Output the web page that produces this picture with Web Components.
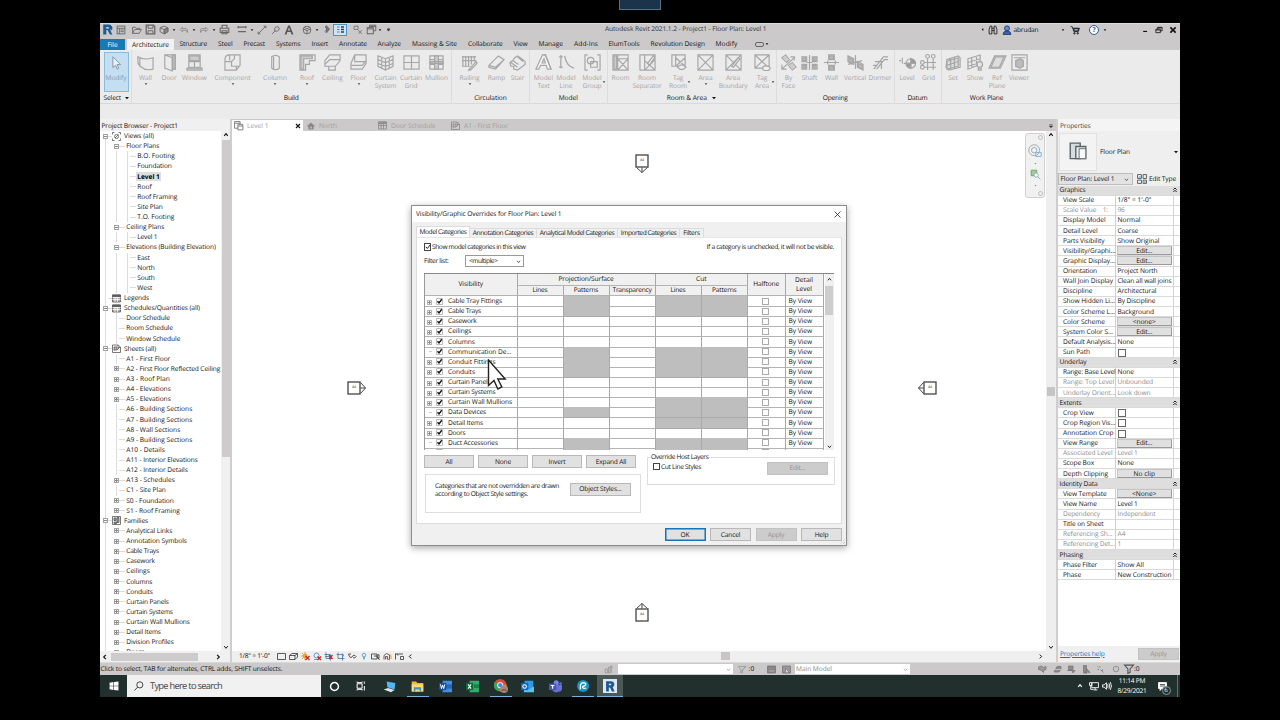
<!DOCTYPE html>
<html lang="en">
<head>
<meta charset="utf-8">
<title>Autodesk Revit 2021.1.2 - Project1 - Floor Plan: Level 1</title>
<style>
  body {
    margin: 0;
    width: 1280px;
    height: 720px;
    overflow: hidden;
    background: #000;
    color: #111;
    font: 6.6px/10px "Open Sans", "Noto Sans", sans-serif;
    text-rendering: geometricPrecision;
  }
</style>
</head>
<body>
<revit-app></revit-app>

<script>
const ICONS = {
  revit: '<path d="M2 1h9.500a4.500 4.500 0 0 1 1.600 8.600L17 17h-4l-4-7H7v7H2z" fill="#1f5d99" stroke="none"/><path d="M7 5h4v2.500H7z" fill="#cfe3f3" stroke="none"/><path d="M14 3l2 2v4l-2 1" stroke="#123a66"/>',
  home: '<rect x="2" y="2" width="14" height="14"/><path d="M2 6h14M6 6v10M8 9h6M8 12h6"/>',
  open: '<path d="M1 15V4h5l2 2h6v2M1 15l4-7h12l-4 7z"/>',
  save: '<path d="M2 2h12l2 2v12H2z" stroke-width="2"/><path d="M5 2v5h8V2M5 16v-5h8v5"/>',
  cube: '<path d="M9 2l7 3v7l-7 4-7-4V5zM2 5l7 3 7-3M9 8v8"/><path d="M10 9l6-3v6l-6 4z" fill="#8a8a8a"/>',
  undo: '<path d="M6 4L2 8l4 4V9.500h5q4 0 4 4 2-8-4-7H6z"/>',
  redo: '<path d="M12 4l4 4-4 4V9.500H7q-4 0-4 4-2-8 4-7h5z"/>',
  print: '<path d="M5 6V2h8v4M2 7h14v7H2zM5 11h8v5H5z" stroke-width="1.800"/>',
  dim: '<path d="M2 4h14M2 2v4M16 2v4M2 12h14" stroke-width="2.200"/>',
  align: '<path d="M2 16L16 2M2 12v4h4M12 2h4v4"/>',
  tag: '<path d="M2 16l5-5M7 11q-2-8 5-8 5 2 2 6-2 3-7 2z"/>',
  text: '<path d="M1 17L7.500 1h3L17 17h-3.500L12 12.500H6L4.500 17zM7 10h4L9 4.500z" fill="currentColor" stroke="none"/>',
  globe: '<circle cx="9" cy="9" r="7"/><path d="M2 7l7 3 7-3M9 10v6M4 4l5 3 5-3"/>',
  section: '<path d="M6 4l3-3 6 7-6 8-3-3 4-5z"/><path d="M9 3l5 5-5 6z" fill="#777"/>',
  thin: '<path d="M2 4h5M2 9h5M2 14h5" stroke-width="1.300"/><path d="M10 4h6M10 9h6M10 14h6" stroke-width="2.800"/>',
  closewin: '<path d="M2 2h7v6H2zM8 8l8 8M16 9l-6 7"/>',
  windows: '<rect x="2" y="6" width="10" height="10"/><path d="M6 6V2h10v9h-4M2 8h10M6 4h10"/>',
  down: '<path d="M3 6h12l-6 7z" fill="currentColor" stroke="none"/>',
  left: '<path d="M12 4v10L6 9z" fill="currentColor" stroke="none"/>',
  more: '<path d="M4 5h10M4 9h10l-5 5z" fill="currentColor"/>',
  arrow: '<path d="M5 1v14l3.500-3 2 5 2-1-2-5H15z" fill="#e8f2f9"/>',
  wall: '<path d="M1 3q6 4 16 1v12q-8 2-12-2-3-1-4-5zM3 4v8"/>',
  door: '<path d="M4 1h11v15h-3M4 1l8 3v14l-8-3z"/><path d="M12 1h3v15h-3z" fill="#bbb"/>',
  window: '<path d="M3 1h12v13H3zM9 1v13M3 8h12M1 16h16"/><path d="M4 2h10v5H4zM1 15h16v2H1z" fill="#ccc"/>',
  component: '<path d="M1 6q0-5 5-5h11v11l-4 5H1zM1 8h7v5h9M8 8l3-3V1M6 1v6M13 13v4"/>',
  column: '<path d="M5 3q4-3 8 0v12q-4 3-8 0zM7 3v13"/>',
  roof: '<path d="M1 1h16v6h-6v4H7v6H1zM1 4h13M4 4v13"/><path d="M2 2h12v3H5v11H2z" fill="#ccc"/>',
  ceiling: '<path d="M1 7l5-6h11v6l-5 6H1zM1 11l5-5h11M5 13v4h7v-4"/>',
  floor: '<path d="M1 10l4-9h12v9l-4 6H1zM1 12h12l4-5M5 1v7h12"/>',
  curtain: '<path d="M1 2l8 3 8-3v11l-8 4-8-4zM9 5v12M1 6l8 3 8-3M1 10l8 3 8-3M5 3v12M13 3v12"/>',
  grid4: '<rect x="1" y="2" width="16" height="14"/><path d="M9 2v14M1 9h16"/>',
  mullion: '<path d="M2 2h6v14H2zM10 2h6v14h-6zM2 6h6M2 11h6M10 6h6M10 11h6"/><path d="M7 2h4v14H7zM2 8h14v2H2z" fill="#ccc"/>',
  railing: '<path d="M1 3h15M1 7h15M2 2v11M5 2v11M8 2v11M11 2v9M14 2v6M1 13h9M8 17l8-9 1 2-7 7z"/>',
  ramp: '<path d="M1 12L11 2l6 4-9 10-7-2zM1 12l7 2 9-8"/>',
  stair: '<path d="M1 9l3-2 2-3 3-2 3 2 5 4v3l-8 6-4-1V13H2zM4 7l6 4M9 3l6 5M2 9l7 5"/>',
  mtext: '<path d="M1 16L8 1h3l6 15h-4l-1-4H6l-2 4zM7.500 9.500h3.500L9.500 5z" fill="#f6f6f6"/><path d="M9 1l2 0 6 15"/>',
  mline: '<path d="M3 1v14M1 3h4M1 14h4M7 2q2 11 10 13" stroke-width="1.300"/>',
  group: '<path d="M4 1H1v16h3M14 1h3v16h-3"/><circle cx="7" cy="7" r="3.500"/><path d="M7 8h7v6H7z"/>',
  room: '<path d="M1 1h16v16H1zM6 1v16M6 5h11M6 5l11 12M17 5L6 17"/><path d="M2 2h3v14H2z" fill="#ccc"/>',
  roomsep: '<path d="M1 1h16v16H1zM6 1v16M6 17L17 6M6 7l11 10M9 10l6-8 2 1-6 9z"/>',
  tagroom: '<path d="M2 1h14v12H2zM6 1v12M6 4l10 9M16 4L6 13"/><path d="M8 14q4-5 9 0-4 5-9 0z" fill="#eee"/>',
  area: '<path d="M1 1h16v16H1zM1 1l16 16M17 1L1 17"/>',
  boundary: '<path d="M1 1h16v16H1zM1 1l16 16M17 1L1 17"/><path d="M7 13l7-9 2 1-7 9z" fill="#eee"/>',
  tagarea: '<path d="M1 1h15v14H1zM1 1l15 14M16 1L1 15"/><ellipse cx="13" cy="15" rx="4" ry="2.500" fill="#eee"/>',
  byface: '<path d="M2 4l4-3 4 5-3 3zM9 12l4-3 4 5-4 3zM2 16L16 3M11 3h4v4M2 11v5h5"/><path d="M3 4l3-2 3 4-2 2zM10 12l3-2 3 4-3 2z" fill="#ccc" stroke="none"/>',
  shaft: '<path d="M1 3h5v5H1zM1 11h5v5H1zM12 3h5v5h-5zM12 11h5v5h-5zM9 1v16M6 9h6" /><path d="M2 4h3v3H2zM2 12h3v3H2zM13 4h3v3h-3zM13 12h3v3h-3z" fill="#bbb"/>',
  owall: '<path d="M6 1h6v5H6zM6 12h6v5H6zM1 9h16M5 7v4M13 7v4"/><path d="M7 2h4v3H7zM7 13h4v3H7z" fill="#bbb"/>',
  vertical: '<path d="M1 2l6 3v6L1 8zM11 8l6 3v6l-6-3zM9 1v15M1 11l15-4"/><path d="M2 4l4 2v4L2 8zM12 10l4 2v4l-4-2z" fill="#bbb"/>',
  dormer: '<path d="M2 16L12 3h5M5 16L13 6h4M3 8h7v8M1 12h5" stroke-width="1.300"/>',
  level: '<path d="M0 7h2M3.500 4v6M5 10h12M12.500 4v12"/><circle cx="12.500" cy="10" r="5"/><path d="M12.500 5a5 5 0 0 1 5 5h-5zM7.500 10h5v5a5 5 0 0 1-5-5z" fill="#999"/>',
  grid: '<path d="M8 5v12M14 5v12M4 9h13M4 14h13"/><circle cx="8" cy="2.500" r="2"/><circle cx="14" cy="2.500" r="2"/><circle cx="2.500" cy="9" r="2"/><circle cx="2.500" cy="14" r="2"/>',
  set: '<path d="M2 6l12-4 2 2v10L4 17l-3-3zM5 5v11M10 3v12M2 10l13-4M2 14l13-3"/><path d="M2 8l12-4v9L2 16z" fill="#ddd"/><path d="M6 5v11M10 4v11M2 12l12-4"/>',
  show: '<path d="M1 5l13-4v10L1 16zM5 4v11M10 2v11M1 9l13-4M1 13l13-4"/><circle cx="13.500" cy="11" r="3" fill="#e6e6e6"/><path d="M12 15h3v2h-3z"/>',
  refplane: '<path d="M6 2h12l-6 13H0z"/><path d="M5 5h11M3 10l12-7" /><path d="M7 3h9l-5 11H2z" fill="#ddd"/>',
  viewer: '<path d="M1 1h16v16H1zM3 4h12"/><path d="M5 7l5-2 3 2v6l-4 2-4-2z" fill="#bbb"/>',
  view: '<path d="M1 1h10v12H1z"/><path d="M7 6h9v10H7z" fill="#fff"/><path d="M1 4h10M7 9h9"/>',
  house: '<path d="M1 9l8-7 8 7h-3v7H4V9z" fill="#888"/><path d="M7 10h4v5H7z" fill="#eee"/>',
  sched: '<path d="M1 2h16v14H1z"/><path d="M1 2h16v3H1z" fill="#999"/><path d="M6 5v11M11 5v11M1 9h16"/>',
  schedlist: '<path d="M1 2h16v14H1z" fill="#aaa"/><path d="M1 7h16M1 11h16M6 3v13M11 3v13" stroke="#fff"/><path d="M1 2h16v3H1z" fill="#666"/>',
  sheet: '<path d="M1 2h11l5 4v11H1zM12 2v5h5M4 13l4-4 2 3 4-4" /><path d="M4 6h6v6H4z" fill="#bbb"/>',
  family: '<path d="M1 1h16v16H1z"/><path d="M4 4h4v5H4zM10 3h4v10h-4zM4 12h5v3H4z" fill="#999"/>',
  views: '<path d="M1 5V1h4M13 1h4v4M17 13v4h-4M5 17H1v-4"/><circle cx="9" cy="9" r="4"/><path d="M6 12l7-7"/>',
  bino: '<path d="M2 16V8l2-6h3v14zM11 16V2h3l2 6v8zM7 6h4M7 10h4" stroke-width="1.800"/>',
  user: '<circle cx="9" cy="6" r="4.500" fill="#5f8fd0" stroke="#243a63"/><path d="M2 17q0-5 5-6h4q5 1 5 6z" fill="#3c66ac" stroke="#243a63"/>',
  cart: '<path d="M1 3h3l3 9h8l2-6H5" stroke="#333"/><path d="M6 6h10l-2 5H8z" fill="#7fa2c8"/><circle cx="8" cy="15" r="1.300"/><circle cx="14" cy="15" r="1.300"/>',
  close: '<path d="M3 3l12 12M15 3L3 15"/>',
  closebold: '<path d="M3 3l12 12M15 3L3 15" stroke-width="3.500"/>',
  restore: '<path d="M2 7h10v8H2zM6 7V3h10v8h-4M2 9h10M6 4h10" stroke-width="1.800"/>',
  min: '<path d="M3 14h10" stroke-width="3"/>',
  chevup: '<path d="M5 11l4-5 4 5" stroke-width="2.300"/>',
  chevdown: '<path d="M5 7l4 5 4-5" stroke-width="2.200"/>',
  chevleft: '<path d="M11 4L6 9l5 5" stroke-width="2.500"/>',
  chevright: '<path d="M7 4l5 5-5 5" stroke-width="2.500"/>',
  fold: '<path d="M4 8l5-5 5 5M4 15l5-5 5 5" stroke-width="3"/>',
  wheel: '<circle cx="8" cy="8" r="7"/><circle cx="8" cy="8" r="3.500"/><path d="M10 11h7v5h-7z" stroke="#7fb2dd"/>',
  zoom: '<path d="M2 2h9v9H2z" fill="#9ccf98" stroke="#6aa56b"/><circle cx="10" cy="10" r="3.500" fill="#fff"/><path d="M12 12l5 5"/>',
  floorplan: '<path d="M2 1h9v14H2z" fill="#d5dde2"/><path d="M7 4h9v11H7z" fill="#e9edef"/><path d="M10 6h6v9h-6z" fill="#f8f8f8" stroke-width=".8"/>',
  edittype: '<path d="M1 1h7v7H1zM1 11h7v6H1zM11 1h6v7h-6zM11 11h6v6h-6z" stroke="#555"/><path d="M3 4h4v3H3zM12 12h4v4h-4z" fill="#7fc3e0" stroke="none"/>',
  rect: '<path d="M1 3h16v12H1z"/>',
  box: '<path d="M1 7l5-4h11v7l-5 5H1zM1 7h11v8M12 7l5-4"/>',
  sun: '<circle cx="8" cy="8" r="4" fill="#f0b429" stroke="#d78b1c"/><path d="M8 0v3M8 13v3M0 8h3M2 2l2 2M2 14l2-2" stroke="#d78b1c"/><path d="M9 8l8 8M17 8l-8 8" stroke="#c22" stroke-width="2.500"/>',
  shadow: '<circle cx="7" cy="7" r="5" stroke="#4d80b5"/><path d="M2 15h10" stroke="#4d80b5"/><path d="M9 9l7 7M16 9l-7 7" stroke="#c22" stroke-width="2.500"/>',
  crop: '<path d="M4 1v12h13M1 5h12v12M2 9h9v5" stroke="#3d74ac"/><path d="M10 6l7 8M17 6l-7 8" stroke="#c22" stroke-width="2.500"/>',
  crop2: '<path d="M4 1v12h13M1 5h12v12M12 3q5 2 2 6" stroke="#3d74ac"/>',
  glasses: '<path d="M1 4q3 10 7 6l2-3q4-2 6 2-2 5-6 2M1 4h5"/>',
  bulb: '<circle cx="9" cy="7" r="4" stroke="#3c8fca" fill="#d9f0ff"/><path d="M8 12h2v4H8z" stroke="#3c8fca"/>',
  cam: '<path d="M1 4h11v10H1zM12 7l4-2v8l-4-2M6 8h6l5 8"/>',
  analyt: '<path d="M2 15V7l5-4 6 3v9M5 15V9h4v6" stroke="#444"/><path d="M11 4l5 3v7" stroke="#e0a020" stroke-width="2"/><path d="M7 12l6 4" stroke="#c22"/>',
  constr: '<path d="M1 3v12M1 4h15M11 9h6v6h-6zM4 4l2 3"/>',
  work: '<path d="M2 16V9h4v7zM8 16V6h3v10zM13 4v12M10 7l3-4 3 4"/>',
  brush: '<path d="M1 3h15L9 10v6H6v-6z"/><path d="M3 16L16 2"/>',
  block: '<path d="M1 2h16v14H1z" fill="#888"/><path d="M4 12h10" stroke="#bbb"/>',
  block2: '<path d="M1 2h16v14H1z" fill="#999"/><path d="M7 6l8 10-4-1-3 2z" fill="#eee"/>',
  funnel: '<path d="M1 2h16l-6 7v6l-4 2V9z" stroke-width="2"/>',
  selA: '<path d="M1 4l6-2 4 3 5-2v6l-5 2v4l-4-4-6-2z" fill="#999"/>',
  selB: '<path d="M2 14l6-11h8v5l-4 6z" fill="#8c8c8c"/><path d="M1 9h15" stroke="#ccc"/>',
  selC: '<path d="M3 2h9v7H3zM1 11h15l-4 5-2-5z" fill="#8c8c8c"/>',
  selD: '<path d="M3 1h6v15H3z" fill="#8c8c8c"/><path d="M8 6l8 9-5-1-3 3z" fill="#8c8c8c"/>',
  selE: '<path d="M3 3l2 2M8 2v3M3 9h3M9 9l6 6M13 9v3" />',
  gear: '<circle cx="9" cy="9" r="6" stroke-width="2.500" stroke-dasharray="3 1"/>',
  start: '<path d="M1 3l7-1v6.500H1zM9 1.800L17 1v7.500H9zM1 9.500h7V16l-7-1zM9 9.500h8V17l-8-1z" fill="#fff" stroke="none"/>',
  search: '<circle cx="10.500" cy="7" r="5.500"/><path d="M6.500 11L1 17"/>',
  cortana: '<circle cx="9" cy="9" r="6.500" stroke-width="2.400"/>',
  taskview: '<path d="M2 5h9v8H2zM2 1v2h9V1M2 17v-2h9v2M15 1v4M15 9v8" stroke-width="1.800"/>',
  pc: '<path d="M5 2l12 2-1 9-10-3z" fill="#55b4f2" stroke="none"/><path d="M1 13l6-2 9 3-5 3z" fill="#d7e4ea" stroke="none"/>',
  folder: '<path d="M1 2h6l2 2h8v12H1z" fill="#f1b93b" stroke="none"/><path d="M1 6h16v10H1z" fill="#fbd974" stroke="none"/><path d="M4 10h10v6h-2v-3H6v3H4z" fill="#4390c8" stroke="none"/>',
  word: '<path d="M5 1h13v16H5z" fill="#3f8fe0" stroke="none"/><path d="M5 6h13v6H5z" fill="#2467c0" stroke="none"/><path d="M0 4h10v10H0z" fill="#174a9c" stroke="none"/><path d="M2 6l1.500 6L5 7l1.500 5L8 6" stroke="#fff" stroke-width="1.300"/>',
  excel: '<path d="M5 1h13v16H5z" fill="#2fae6b" stroke="none"/><path d="M11 6h7v5h-7z" fill="#1b8048" stroke="none"/><path d="M0 4h10v10H0z" fill="#126a38" stroke="none"/><path d="M3 6l4 6M7 6l-4 6" stroke="#fff" stroke-width="1.500"/>',
  chrome: '<circle cx="8" cy="8" r="8" fill="#e14a3c" stroke="none"/><path d="M1 4a8 8 0 0 0 6 12l3-7z" fill="#3aa357" stroke="none"/><path d="M16 7a8 8 0 0 1-8 9l3-7z" fill="#f3c831" stroke="none"/><circle cx="8" cy="8" r="3.500" fill="#4a86e8" stroke="#fff"/><circle cx="13" cy="13" r="5" fill="#a98476" stroke="none"/><path d="M10 15q3-3 6 0" stroke="#5b3c35"/>',
  outlook: '<path d="M5 1h12v14H5z" fill="#2c9be8" stroke="none"/><path d="M4 9l7 4 7-4v8H4z" fill="#55c3f5" stroke="none"/><path d="M0 4h10v10H0z" fill="#0f67ba" stroke="none"/><circle cx="5" cy="9" r="2.500" stroke="#fff" stroke-width="1.500"/>',
  teams: '<circle cx="10" cy="4" r="3.500" fill="#7b83eb" stroke="none"/><circle cx="16" cy="5" r="2" fill="#6069c8" stroke="none"/><path d="M5 7h13v6q-2 4-5 3-3 3-8-1z" fill="#6870d6" stroke="none"/><path d="M0 5h10v9H0z" fill="#4b53bc" stroke="none"/><path d="M2.500 7.500h5M5 7.500V12" stroke="#fff" stroke-width="1.500"/>',
  edge: '<circle cx="9" cy="9" r="9" fill="#1495c5" stroke="none"/><path d="M5 14q-1-9 4-10 5 0 4 3-1 2-5 3M8 10q1 4 6 2" stroke="#fff" stroke-width="2"/>',
  revitapp: '<path d="M0 0h18v18H0z" fill="#dce9f5" stroke="none"/><path d="M4 3h7a4 4 0 0 1 1.500 7.500L15 16h-3.500L9 11H7.500v5H4z" fill="#1d5796" stroke="none"/><path d="M7.500 6h3v2h-3z" fill="#dce9f5" stroke="none"/>',
  monitor: '<path d="M5 3h12v9H5zM8 16h7M11 12v4M1 3h4v5H1zM3 8v7h5"/>',
  speaker: '<path d="M1 7h3l4-4v12l-4-4H1zM10 6q2 3 0 6M12.500 4q3 5 0 10M15 2q4 7 0 14"/>',
  notif: '<path d="M1 1h16v12H8l-4 4v-4H1z" fill="#fff"/><path d="M4 5h10M4 8h10" stroke="#22302d" stroke-width="1.500"/>'
};

const icon = (name, size = 10, color = '') =>
  `<ui-icon name="${name}" size="${size}"${color ? ` style="color:${color}"` : ''}></ui-icon>`;
const fit = (text, width) => `<fit-text width="${width}">${text}</fit-text>`;

// Lays cells out one after the other; each one is [start, width, markup].
const row = (origin, cells) => {
  let end = origin;
  return cells.map(([start, width, html]) => {
    const gap = (start - end).toFixed(2);
    end = start + width;
    return `<span class="cell" style="margin-left:${gap}px;width:${width}px">${html}</span>`;
  }).join('');
};
const label = (from, to, text) => [from, to - from, fit(text, to - from)];
const glyph = (center, size, name, color) => [center - size / 2, size, icon(name, size, color)];

const CELL = `
  .cell { flex: none; display: flex; align-items: center; justify-content: center; }
`;

class UiIcon extends HTMLElement {
  connectedCallback() {
    const size = Number(this.getAttribute('size'));
    this.attachShadow({ mode: 'open' }).innerHTML = `
      <style>
        :host { display: block; flex: none; width: ${size}px; height: ${size}px; }
        svg { display: block; fill: none; stroke: currentColor; stroke-width: ${size < 12 ? 1.6 : 1.25}; overflow: visible; }
      </style>
      <svg viewBox="0 0 18 18" width="${size}" height="${size}">${ICONS[this.getAttribute('name')]}</svg>
    `;
  }
}
customElements.define('ui-icon', UiIcon);

// A single line of text whose tracking is adjusted to fill the given width.
class FitText extends HTMLElement {
  connectedCallback() {
    this.attachShadow({ mode: 'open' }).innerHTML = `
      <style>
        :host { display: inline-block; white-space: nowrap; }
      </style>
      <span><slot></slot></span>
    `;
    const width = Number(this.getAttribute('width'));
    const span = this.shadowRoot.querySelector('span');
    const natural = span.getBoundingClientRect().width;
    this.style.letterSpacing = `${(width - natural) / this.textContent.length}px`;
  }
}
customElements.define('fit-text', FitText);

class UiButton extends HTMLElement {
  connectedCallback() {
    this.attachShadow({ mode: 'open' }).innerHTML = `
      <style>
        :host {
          box-sizing: border-box;
          display: flex;
          align-items: center;
          justify-content: center;
          height: 13px;
          background: #e1e1e1;
          border: 1px solid #b8b8b8;
          letter-spacing: -0.15px;
          white-space: nowrap;
        }
        :host([primary]) { border-color: #1674b8; box-shadow: inset 0 0 0 0.5px #1674b8; }
        :host([disabled]) { background: #ccc; border-color: #c2c2c2; color: #929292; }
      </style>
      <slot></slot>
    `;
  }
}
customElements.define('ui-button', UiButton);

class TitleBar extends HTMLElement {
  connectedCallback() {
    const gray = '#666';
    const title = fit('Autodesk Revit 2021.1.2 - Project1 - Floor Plan: Level 1', 161.5);
    const cells = [
      glyph(107, 11, 'revit'), glyph(120.5, 10, 'home', gray), glyph(136.5, 10, 'open', gray),
      glyph(150, 11, 'save', gray), glyph(163.5, 10, 'cube', gray), glyph(173.5, 4, 'down'),
      glyph(183.5, 10, 'undo', '#888'), glyph(193.5, 4, 'down'), glyph(204, 10, 'redo', '#888'),
      glyph(213.5, 4, 'down'), glyph(224.5, 11, 'print', gray), glyph(242, 10, 'dim', gray),
      glyph(251.5, 4, 'down'), glyph(262, 10, 'align', gray), glyph(275.5, 10, 'tag', gray),
      glyph(289, 10, 'text', '#555'), glyph(306.5, 10, 'globe', gray), glyph(316.5, 4, 'down'),
      glyph(326, 9, 'section', gray),
      [333, 14, `<span class="on">${icon('thin', 9, '#345')}</span>`],
      glyph(358, 10, 'closewin', '#777'), glyph(371, 11, 'windows', gray), glyph(380, 4, 'down'),
      glyph(388.5, 5, 'more'),
      [605, 161.5, `<span class="title">${title}</span>`],
      glyph(982, 5, 'left'), glyph(993, 10, 'bino', '#333'), glyph(1006.5, 10, 'user'),
      label(1013.5, 1038.5, 'abrudan'),
      glyph(1062.5, 4, 'down'), glyph(1075, 10, 'cart'),
      [1089, 10, '<span class="help">?</span>'], glyph(1104.5, 4, 'down'),
      glyph(1145, 7, 'min'), glyph(1159, 8, 'restore'), glyph(1173, 8, 'closebold')
    ];
    this.attachShadow({ mode: 'open' }).innerHTML = `
      <style>
        ${CELL}
        :host {
          display: flex;
          align-items: center;
          height: 13px;
          border-top: 1px solid #dedede;
          background: #cbc9ca;
        }
        .cell { margin-top: -1.5px; }
        .title { padding-bottom: 2.5px; display: flex; color: #333; }
        .on { box-sizing: border-box; display: flex; align-items: center; justify-content: center; width: 14px; height: 12px; background: #cfe4f5; border: 1px solid #4b93c8; }
        .help { width: 8px; height: 8px; border: 1px solid #31589a; border-radius: 50%; background: #fff; color: #1f4b8e; font-weight: 700; line-height: 8px; text-align: center; }
      </style>
      ${row(100, cells)}
    `;
  }
}
customElements.define('title-bar', TitleBar);

class RibbonTabs extends HTMLElement {
  connectedCallback() {
    const tabs = [
      [179.5, 207, 'Structure'], [218, 232.5, 'Steel'], [243.5, 265, 'Precast'],
      [276, 300.5, 'Systems'], [311.5, 328, 'Insert'], [339, 367, 'Annotate'], [377.5, 401, 'Analyze'],
      [412, 457, 'Massing &amp; Site'], [468, 502.5, 'Collaborate'], [513.5, 527.5, 'View'],
      [538.5, 563, 'Manage'], [574, 598, 'Add-Ins'], [608.5, 639.5, 'ElumTools'],
      [650.5, 705, 'Revolution Design'], [715.5, 737.5, 'Modify']
    ];
    this.attachShadow({ mode: 'open' }).innerHTML = `
      <style>
        ${CELL}
        :host { display: flex; align-items: center; height: 13px; background: #cbc9ca; }
        .cell { padding-top: 1px; }
        .file, .active { height: 11px; width: 100%; display: flex; align-items: center; justify-content: center; margin-top: 1px; }
        .file { background: #1979b4; color: #fff; }
        .active { background: #f1f1f2; }
        .pill { width: 7px; height: 3px; border: 1px solid #666; border-radius: 2px; }
      </style>
      ${row(100, [
        [100, 25, `<span class="file">${fit('File', 10)}</span>`],
        [127, 47, `<span class="active">${fit('Architecture', 37)}</span>`],
        ...tabs.map((tab) => label(...tab)),
        [754, 10, '<span class="pill"></span>'], glyph(767, 4, 'down')
      ])}
    `;
  }
}
customElements.define('ribbon-tabs', RibbonTabs);

// [center, icon, label lines, line widths, drop-down arrow]
const PANELS = {
  build: [
    [145.5, 'wall', ['Wall'], [13], 'under'], [169, 'door', ['Door'], [15]],
    [194.5, 'window', ['Window'], [25]], [232.5, 'component', ['Component'], [36], 'under'],
    [275, 'column', ['Column'], [24], 'under'], [307, 'roof', ['Roof'], [14], 'under'],
    [332.5, 'ceiling', ['Ceiling'], [21]], [358.5, 'floor', ['Floor'], [16], 'under'],
    [385.5, 'curtain', ['Curtain', 'System'], [22, 21.5]],
    [411, 'grid4', ['Curtain', 'Grid'], [22, 13]], [436.5, 'mullion', ['Mullion'], [23]]
  ],
  circulation: [
    [469.5, 'railing', ['Railing'], [20], 'under'], [496.5, 'ramp', ['Ramp'], [17.5]],
    [517.5, 'stair', ['Stair'], [13.5]]
  ],
  model: [
    [543.5, 'mtext', ['Model', 'Text'], [19.5, 12]], [566, 'mline', ['Model', 'Line'], [19.5, 13]],
    [592, 'group', ['Model', 'Group'], [19.5, 19], 'side']
  ],
  room: [
    [620.5, 'room', ['Room'], [18]], [647, 'roomsep', ['Room', 'Separator'], [18, 29]],
    [678, 'tagroom', ['Tag', 'Room'], [10, 18], 'side'], [705.5, 'area', ['Area'], [14], 'under'],
    [733, 'boundary', ['Area', 'Boundary'], [14, 28.5]],
    [762, 'tagarea', ['Tag', 'Area'], [10, 14], 'side']
  ],
  opening: [
    [788.5, 'byface', ['By', 'Face'], [7.5, 14]], [809.5, 'shaft', ['Shaft'], [15.5]],
    [831.5, 'owall', ['Wall'], [13]], [855, 'vertical', ['Vertical'], [22]],
    [880, 'dormer', ['Dormer'], [23]]
  ],
  datum: [[907, 'level', ['Level'], [15]], [928.5, 'grid', ['Grid'], [13]]],
  work: [
    [953, 'set', ['Set'], [9.5]], [975, 'show', ['Show'], [16.5]],
    [997, 'refplane', ['Ref', 'Plane'], [10, 16.5]], [1019, 'viewer', ['Viewer'], [20]]
  ]
};

class RibbonPanel extends HTMLElement {
  connectedCallback() {
    const start = Number(this.getAttribute('start'));
    const end = Number(this.getAttribute('end'));
    const tools = PANELS[this.getAttribute('name')];
    const cells = tools.map(([center, name, lines, widths, drop]) => {
      const width = Math.max(...widths, 17);
      return [center - width / 2, width, `
        <span class="tool">
          ${icon(name, 17, '#a6a6a6')}
          ${lines.map((line, i) => `<span class="line">${fit(line, widths[i])}</span>`).join('')}
          ${drop ? `<span class="drop ${drop}">${icon('down', 4, '#444')}</span>` : ''}
        </span>`];
    });
    this.attachShadow({ mode: 'open' }).innerHTML = `
      <style>
        ${CELL}
        :host {
          box-sizing: border-box;
          display: flex;
          flex-direction: column;
          flex: none;
          width: ${end - start}px;
          border-right: 1px solid #dcdcdd;
        }
        .tools { display: flex; height: 43px; color: #a4a4a4; }
        .cell { align-items: flex-start; }
        .tool { position: relative; display: flex; flex-direction: column; align-items: center; padding-top: 4px; }
        .line { height: 8.5px; line-height: 8.5px; display: flex; }
        ui-icon { margin-bottom: 2.5px; }
        .drop { height: 4px; }
        .side { position: absolute; right: -4px; top: 30px; }
        .drop ui-icon { margin: 0; }
        .name { display: flex; align-items: center; justify-content: center; gap: 4px; height: 10px; }
      </style>
      <div class="tools">${row(start, cells)}</div>
      <div class="name"><slot></slot></div>
    `;
  }
}
customElements.define('ribbon-panel', RibbonPanel);

class RibbonBar extends HTMLElement {
  connectedCallback() {
    this.attachShadow({ mode: 'open' }).innerHTML = `
      <style>
        :host { display: block; height: 69px; background: #ebebec; }
        .panels { display: flex; height: 53px; border-bottom: 1px solid #d9d9da; }
        .select { box-sizing: border-box; display: flex; flex-direction: column; width: 31.5px; border-right: 1px solid #dcdcdd; padding: 1.5px 0 0 3.5px; }
        .modify {
          box-sizing: border-box;
          display: flex;
          flex-direction: column;
          align-items: center;
          gap: 3px;
          width: 25px;
          height: 41px;
          padding-top: 3px;
          border: 1px solid #8bbbd9;
          background: #c3dff1;
          color: #8b9ba6;
        }
        .name { display: flex; align-items: center; gap: 3px; height: 11px; }
      </style>
      <div class="panels">
        <div class="select">
          <div class="modify">${icon('arrow', 14, '#8795a0')}${fit('Modify', 21)}</div>
          <div class="name">${fit('Select', 17.5)}${icon('down', 6)}</div>
        </div>
        <ribbon-panel name="build" start="131.5" end="452">${fit('Build', 15)}</ribbon-panel>
        <ribbon-panel name="circulation" start="452" end="530">${fit('Circulation', 32.5)}</ribbon-panel>
        <ribbon-panel name="model" start="530" end="607.5">${fit('Model', 19)}</ribbon-panel>
        <ribbon-panel name="room" start="607.5" end="777">${fit('Room &amp; Area', 40)}${icon('down', 6)}</ribbon-panel>
        <ribbon-panel name="opening" start="777" end="894.5">${fit('Opening', 25)}</ribbon-panel>
        <ribbon-panel name="datum" start="894.5" end="941.5">${fit('Datum', 20)}</ribbon-panel>
        <ribbon-panel name="work" start="941.5" end="1031.5" style="border:0">${fit('Work Plane', 33.5)}</ribbon-panel>
      </div>
    `;
  }
}
customElements.define('ribbon-bar', RibbonBar);

// [depth, expander, label, width, icon, current]
const TREE = [
  [0, '-', 'Views (all)', 30, 'views'], [1, '-', 'Floor Plans', 33], [2, '', 'B.O. Footing', 37.5],
  [2, '', 'Foundation', 34.5], [2, '', 'Level 1', 22.5, '', true], [2, '', 'Roof', 14.5],
  [2, '', 'Roof Framing', 40], [2, '', 'Site Plan', 25.5], [2, '', 'T.O. Footing', 37],
  [1, '-', 'Ceiling Plans', 38], [2, '', 'Level 1', 20], [1, '-', 'Elevations (Building Elevation)', 89.5],
  [2, '', 'East', 12.5], [2, '', 'North', 17.5], [2, '', 'South', 17.5], [2, '', 'West', 15],
  [0, '', 'Legends', 25, 'schedlist'], [0, '-', 'Schedules/Quantities (all)', 76, 'schedlist'],
  [1, '', 'Door Schedule', 43.5], [1, '', 'Room Schedule', 46.5], [1, '', 'Window Schedule', 54],
  [0, '-', 'Sheets (all)', 32, 'sheet'], [1, '', 'A1 - First Floor', 44],
  [1, '+', 'A2 - First Floor Reflected Ceiling', 94], [1, '+', 'A3 - Roof Plan', 43.5],
  [1, '+', 'A4 - Elevations', 44.5], [1, '+', 'A5 - Elevations', 44.5],
  [1, '', 'A6 - Building Sections', 66], [1, '', 'A7 - Building Sections', 66],
  [1, '', 'A8 - Wall Sections', 54], [1, '', 'A9 - Building Sections', 66],
  [1, '', 'A10 - Details', 38.5], [1, '', 'A11 - Interior Elevations', 71.5],
  [1, '', 'A12 - Interior Details', 61.5], [1, '+', 'A13 - Schedules', 48.5],
  [1, '', 'C1 - Site Plan', 39.5], [1, '+', 'S0 - Foundation', 47.5], [1, '+', 'S1 - Roof Framing', 53.5],
  [0, '-', 'Families', 24, 'family'], [1, '+', 'Analytical Links', 46], [1, '+', 'Annotation Symbols', 60.5],
  [1, '+', 'Cable Trays', 32.5], [1, '+', 'Casework', 28.5], [1, '+', 'Ceilings', 23.5],
  [1, '+', 'Columns', 26], [1, '+', 'Conduits', 26.5], [1, '+', 'Curtain Panels', 42.5],
  [1, '+', 'Curtain Systems', 46.5], [1, '+', 'Curtain Wall Mullions', 63.5],
  [1, '+', 'Detail Items', 34.5], [1, '+', 'Division Profiles', 47.5], [1, '+', 'Doors', 18]
];

class ProjectBrowser extends HTMLElement {
  connectedCallback() {
    const rows = TREE.map(([depth, expander, text, width, name, current]) => `
      <div class="row">
        <span class="pad${depth ? ' nested' : ''}" style="width:${2.5 + depth * 11}px"></span>
        ${expander ? `<span class="exp ${expander === '+' ? 'plus' : ''}"></span>` : '<span class="noexp"></span>'}
        <span class="stub" style="width:${name ? 4 : 6}px"></span>
        ${name ? icon(name, 9, '#555') : ''}
        <span class="text${current ? ' current' : ''}">${fit(text, width)}</span>
      </div>`).join('');
    this.attachShadow({ mode: 'open' }).innerHTML = `
      <style>
        :host { display: flex; flex-direction: column; width: 130px; flex: none; background: #fff; overflow: hidden; border-right: 2px solid #cfcdce; }
        .title { height: 12px; line-height: 13px; padding-left: 1.5px; background: #f0f0f0; }
        .body { display: flex; height: 520px; }
        .tree { width: 121px; overflow: hidden; background: linear-gradient(#dcdcdc, #dcdcdc) 5px 5px / 1px 100% no-repeat; }
        .row { display: flex; align-items: center; height: 10.135px; white-space: nowrap; }
        .pad, .exp, .noexp, .stub { flex: none; }
        .pad { align-self: stretch; }
        .nested { background: linear-gradient(#dcdcdc, #dcdcdc) calc(100% - 8px) 0 / 1px 100% no-repeat; }
        .exp { position: relative; box-sizing: border-box; width: 5px; height: 5px; border: 1px solid #a2a2a2; background: #fff; }
        .exp::before { content: ""; position: absolute; left: 0; top: 1px; width: 3px; height: 1px; background: #888; }
        .plus::after { content: ""; position: absolute; left: 1px; top: 0; width: 1px; height: 3px; background: #888; }
        .noexp { width: 2.5px; margin-left: 2.5px; height: 100%; border-left: 1px solid #dcdcdc; box-sizing: border-box; }
        .stub { height: 1px; background: #dcdcdc; }
        ui-icon { margin-left: 0.5px; }
        .text { padding-left: 1.8px; }
        ui-icon + .text { padding-left: 3px; }
        .text.current { background: #dedede; font-weight: 700; line-height: 9px; color: #000; padding-right: 1.5px; }
        .vbar { display: flex; flex-direction: column; align-items: center; width: 9px; background: #f0f0f0; }
        .vthumb { width: 8px; height: 317px; margin: 1px 0 auto; background: #cdcbcc; }
        .hbar { display: flex; align-items: center; height: 11px; background: #f0f0f0; }
        .hthumb { width: 87px; height: 8px; margin: 0 16px 0 2px; background: #cdcbcc; }
      </style>
      <div class="title">${fit('Project Browser - Project1', 76.5)}</div>
      <div class="body">
        <div class="tree">${rows}</div>
        <div class="vbar">${icon('chevup', 8)}<span class="vthumb"></span>${icon('chevdown', 8)}</div>
      </div>
      <div class="hbar">${icon('chevleft', 8)}<span class="hthumb"></span>${icon('chevright', 8)}</div>
    `;
  }
}
customElements.define('project-browser', ProjectBrowser);

class ElevationMark extends HTMLElement {
  connectedCallback() {
    this.attachShadow({ mode: 'open' }).innerHTML = `
      <style>
        :host { position: absolute; width: 20px; height: 20px; margin: -10px 0 0 -10px; }
        svg { display: block; overflow: visible; }
        .tag { position: absolute; inset: 0; display: flex; align-items: center; justify-content: center; font-size: 3.5px; color: #222; }
      </style>
      <svg viewBox="0 0 20 20" fill="#fff" stroke="#444" stroke-width="1">
        <path transform="rotate(${this.getAttribute('turn')} 10 10)" d="M4.500 16.500L10 21.500l5.500-5M10 16.500V21.500"/>
        <rect x="4" y="4" width="12" height="12" stroke-width="1.300"/>
      </svg>
      <span class="tag">A4</span>
    `;
  }
}
customElements.define('elevation-mark', ElevationMark);

class DrawingView extends HTMLElement {
  connectedCallback() {
    this.attachShadow({ mode: 'open' }).innerHTML = `
      <style>
        ${CELL}
        :host { display: flex; flex-direction: column; flex: none; width: 824px; }
        .tabs { display: flex; align-items: center; height: 12px; background: #cbc9ca; color: #a0a0a0; }
        .tabs .cell { padding-top: 1px; }
        .open { display: flex; align-items: center; width: 100%; height: 12px; background: #fff; }
        .open ui-icon:first-child { margin: 0 3px 0 2px; }
        .open ui-icon:last-child { margin: 0 2px 0 auto; }
        .middle { display: flex; height: 520px; }
        .canvas { position: relative; width: 814px; background: #fff; }
        .nav {
          position: absolute; left: 793px; top: 2px; box-sizing: border-box; width: 20px; height: 65px;
          border: 1px solid #d0d0d0; border-radius: 3px; background: #f1f1f1;
          display: flex; flex-direction: column; align-items: center; gap: 4px; padding-top: 10px; color: #9aaab5;
        }
        .dot { position: absolute; right: 1px; width: 3px; height: 3px; border: 1px solid #bbb; border-radius: 50%; }
        .vbar { display: flex; flex-direction: column; align-items: center; width: 10px; background: #efeeef; }
        .vbar i { width: 8px; height: 9px; margin: 248px 0 auto; background: #c6c4c5; }
        .foot { display: flex; align-items: center; height: 11px; background: #efefef; }
        .foot .cell { margin-top: -1px; }
        .hthumb { width: 9px; height: 8px; background: #c6c4c5; }
      </style>
      <div class="tabs">${row(232, [
        [232, 71, `<span class="open">${icon('view', 10, '#777')}${fit('Level 1', 21.5)}${icon('closebold', 6, '#111')}</span>`],
        glyph(311, 8, 'house', '#888'), label(319, 337, 'North'),
        glyph(382.5, 9, 'sched', '#888'), label(391, 435.5, 'Door Schedule'),
        glyph(455.5, 9, 'sheet', '#888'), label(464, 508, 'A1 - First Floor'),
        glyph(1050.5, 6, 'more', '#333')
      ])}</div>
      <div class="middle">
        <div class="canvas">
          <elevation-mark turn="0" style="left:410px;top:30px"></elevation-mark>
          <elevation-mark turn="-90" style="left:122px;top:257px"></elevation-mark>
          <elevation-mark turn="90" style="left:698px;top:257px"></elevation-mark>
          <elevation-mark turn="180" style="left:410px;top:484px"></elevation-mark>
          <div class="nav">
            <span class="dot" style="top:1px"></span>
            ${icon('wheel', 14)}${icon('down', 3, '#777')}${icon('zoom', 11)}${icon('down', 3, '#777')}
            <span class="dot" style="bottom:1px"></span>
          </div>
        </div>
        <div class="vbar">${icon('chevup', 8)}<i></i>${icon('chevdown', 8)}</div>
      </div>
      <div class="foot">${row(232, [
        label(239, 270, '1/8" = 1\'-0"'),
        glyph(281.5, 9, 'rect', '#333'), glyph(293.5, 9, 'box', '#333'), glyph(305, 9, 'sun'),
        glyph(317, 9, 'shadow'), glyph(328.5, 9, 'crop'), glyph(340, 9, 'crop2'), glyph(352, 9, 'glasses', '#333'),
        glyph(363.5, 8, 'bulb'), glyph(375.5, 9, 'cam', '#333'), glyph(387, 9, 'analyt'),
        glyph(399, 9, 'constr', '#333'), glyph(410.5, 7, 'chevleft', '#111'),
        [721, 9, '<span class="hthumb"></span>'], glyph(1040.5, 7, 'chevright', '#111')
      ])}</div>
    `;
  }
}
customElements.define('drawing-view', DrawingView);

// [kind, name, name width, value, value width]
const PROPS = [
  ['head', 'Graphics', 26], ['text', 'View Scale', 31, '1/8" = 1\'-0"', 34],
  ['off', 'Scale Value &nbsp; &nbsp;1:', 45, '96', 7], ['text', 'Display Model', 42.5, 'Normal', 23],
  ['text', 'Detail Level', 34.5, 'Coarse', 20.5], ['text', 'Parts Visibility', 41.5, 'Show Original', 42],
  ['button', 'Visibility/Graphi...', 52.5, 'Edit...', 16], ['button', 'Graphic Display...', 52, 'Edit...', 16],
  ['text', 'Orientation', 34, 'Project North', 40], ['text', 'Wall Join Display', 50, 'Clean all wall joins', 54],
  ['text', 'Discipline', 29.5, 'Architectural', 39], ['text', 'Show Hidden Li...', 52, 'By Discipline', 38],
  ['text', 'Color Scheme L...', 52, 'Background', 36.5], ['button', 'Color Scheme', 42, '&lt;none&gt;', 23],
  ['button', 'System Color S...', 50, 'Edit...', 16], ['text', 'Default Analysis...', 52.5, 'None', 16.5],
  ['check', 'Sun Path', 27],
  ['head', 'Underlay', 27], ['text', 'Range: Base Level', 52.5, 'None', 16.5],
  ['off', 'Range: Top Level', 51, 'Unbounded', 35.5], ['off', 'Underlay Orient...', 52.5, 'Look down', 33],
  ['head', 'Extents', 22], ['check', 'Crop View', 31], ['check', 'Crop Region Vis...', 52.5],
  ['check', 'Annotation Crop', 50.5], ['button', 'View Range', 35, 'Edit...', 16],
  ['off', 'Associated Level', 49.5, 'Level 1', 20], ['text', 'Scope Box', 31, 'None', 16.5],
  ['button', 'Depth Clipping', 45, 'No clip', 21.5],
  ['head', 'Identity Data', 38], ['button', 'View Template', 43.5, '&lt;None&gt;', 24.5],
  ['text', 'View Name', 34, 'Level 1', 20], ['off', 'Dependency', 37, 'Independent', 38],
  ['text', 'Title on Sheet', 40.5, '', 0], ['off', 'Referencing Sh...', 49.5, 'A4', 8],
  ['off', 'Referencing Det...', 52, '1', 3],
  ['head', 'Phasing', 23.5], ['text', 'Phase Filter', 34, 'Show All', 26.5],
  ['text', 'Phase', 18, 'New Construction', 54]
];

class PropertiesPanel extends HTMLElement {
  connectedCallback() {
    const rows = PROPS.map(([kind, name, width, value, valueWidth]) => {
      if (kind === 'head') {
        return `<div class="row head">${fit(name, width)}${icon('fold', 6, '#222')}</div>`;
      }
      let cell = value ? fit(value, valueWidth) : '';
      if (kind === 'button') cell = `<span class="push">${cell}</span>`;
      if (kind === 'check') cell = '<span class="box"></span>';
      return `<div class="row ${kind}"><span class="key">${fit(name, width)}</span><span class="value">${cell}</span><span class="end"></span></div>`;
    }).join('');
    this.attachShadow({ mode: 'open' }).innerHTML = `
      <style>
        :host { box-sizing: border-box; display: flex; flex-direction: column; flex: none; width: 124px; border-left: 2px solid #cfcdce; background: #fff; overflow: hidden; }
        .title { height: 12px; line-height: 13px; padding-left: 2px; background: #f4f4f4; color: #444; }
        .type { display: flex; align-items: center; height: 41.5px; background: #efefef; }
        .preview { display: flex; align-items: center; justify-content: center; width: 36px; height: 36px; margin: 0 3px 0 1px; border: 1px solid #e2e2e2; background: #f3f3f3; }
        .type > ui-icon { margin-left: auto; margin-right: 1px; }
        .pick { display: flex; align-items: center; height: 13px; background: #efefef; }
        .select { box-sizing: border-box; display: flex; align-items: center; justify-content: space-between; width: 75px; height: 12px; margin-right: 4px; padding: 0 2px 0 1.5px; border: 1px solid #bdbdbd; background: #e2e2e2; }
        .pick > fit-text { margin-left: 2px; }
        .row { box-sizing: border-box; display: flex; flex: none; align-items: center; height: 10.135px; border-bottom: 1px solid #dadada; }
        .head { justify-content: space-between; padding: 0 2px 0 1.5px; background: #dedede; }
        .off { color: #8c8c8c; }
        .key { box-sizing: border-box; width: 58px; height: 10px; padding-left: 5px; border-right: 1px solid #cfcfcf; white-space: nowrap; }
        .value { box-sizing: border-box; display: flex; align-items: center; width: 57px; height: 10px; padding-left: 1.5px; white-space: nowrap; }
        .end { width: 1px; height: 10px; background: #d4d4d4; }
        .push { box-sizing: border-box; display: flex; align-items: center; justify-content: center; width: 55.5px; height: 9px; margin-left: -1px; border: 1px solid #c4c4c4; border-bottom-color: #9a9a9a; border-right-color: #9a9a9a; background: #e0e0e0; }
        .box { width: 6px; height: 6px; margin: 1px 0 0 0.5px; border: 1px solid #666; background: #fff; }
        .grow { flex: 1; }
        .foot { display: flex; align-items: center; justify-content: space-between; height: 16px; background: #f0f0f0; padding: 0 1px 0 2px; }
        .help fit-text { color: #1b6fb5; text-decoration: underline; }
        ui-button { width: 41px; height: 12px; }
      </style>
      <div class="title">${fit('Properties', 30.5)}</div>
      <div class="type"><span class="preview">${icon('floorplan', 20, '#5c6468')}</span>${fit('Floor Plan', 30)}${icon('down', 6)}</div>
      <div class="pick"><span class="select">${fit('Floor Plan: Level 1', 54)}${icon('chevdown', 7, '#555')}</span>${icon('edittype', 10)}${fit('Edit Type', 27)}</div>
      ${rows}
      <div class="grow"></div>
      <div class="foot"><span class="help">${fit('Properties help', 44.5)}</span><ui-button disabled>Apply</ui-button></div>
    `;
  }
}
customElements.define('properties-panel', PropertiesPanel);

// [label, width, expandable, shaded columns]
const CATEGORIES = [
  ['Cable Tray Fittings', 54, 1, '245'], ['Cable Trays', 33, 1, '245'], ['Casework', 28.5, 1, ''],
  ['Ceilings', 23.5, 1, ''], ['Columns', 27, 1, ''], ['Communication De...', 63.5, 0, '245'],
  ['Conduit Fittings', 47.5, 1, '245'], ['Conduits', 27, 1, '245'], ['Curtain Panels', 42.5, 1, ''],
  ['Curtain Systems', 47.5, 1, ''], ['Curtain Wall Mullions', 64, 1, ''], ['Data Devices', 38, 0, '245'],
  ['Detail Items', 35, 1, '45'], ['Doors', 17.5, 1, ''], ['Duct Accessories', 50, 0, '245'],
  ['Duct Fittings', 38, 1, '245']
];

class CategoryTable extends HTMLElement {
  connectedCallback() {
    const rows = CATEGORIES.map(([text, width, expandable, shaded]) => `
      <div class="grid row">
        <span class="name">
          <span class="${expandable ? 'exp' : 'stub'}"></span>
          <svg width="7" height="7" viewBox="0 0 7 7"><path d="M.5.5h6v6h-6z" fill="#fff" stroke="#bbb"/><path d="M1.500 3.200l1.500 1.700 2.800-3.600" fill="none" stroke="#111" stroke-width="1.400"/></svg>
          ${fit(text, width)}
        </span>
        ${[1, 2, 3, 4, 5].map((n) => `<span class="${shaded.includes(n) ? 'shade' : ''}"></span>`).join('')}
        <span class="half"><i></i></span>
        <span class="level">${fit('By View', 23.5)}</span>
      </div>`).join('');
    this.attachShadow({ mode: 'open' }).innerHTML = `
      <style>
        :host { display: flex; width: 410px; height: 177px; overflow: hidden; border-top: 1px solid #888; box-sizing: border-box; }
        .table { width: 399px; border-left: 1px solid #999; overflow: hidden; }
        .grid { display: grid; grid-template-columns: 92.5px 46px 46px 46px 46px 46.5px 37.5px 38px; }
        .grid > span { box-sizing: border-box; border-right: 1px solid #a8a8a8; border-bottom: 1px solid #b4b4b4; }
        .head { height: 22px; grid-template-rows: 11.5px 10.5px; }
        .head > span { display: flex; align-items: center; justify-content: center; text-align: center; line-height: 8.5px; white-space: nowrap; background: #f0f0f0; }
        .tall { grid-row: span 2; }
        .row { height: 10.135px; }
        .grid .shade { background: #bebebe; border-color: #aaa; }
        .name { display: flex; align-items: center; padding-left: 2px; white-space: nowrap; }
        .name svg { margin: 0 5px 0 4px; flex: none; }
        .exp { flex: none; box-sizing: border-box; width: 5px; height: 5px; margin-top: 2px; border: 1px solid #b4b4b4; background: linear-gradient(#888, #888) 1px 0 / 1px 3px no-repeat, linear-gradient(#888, #888) 0 1px / 3px 1px no-repeat; }
        .stub { flex: none; width: 5px; height: 1px; background: linear-gradient(90deg, transparent 2px, #ccc 2px); }
        .half { display: flex; align-items: center; justify-content: center; }
        .half i { width: 5px; height: 5px; margin-right: 1px; border: 1px solid #aaa; background: #fff; }
        .level { display: flex; align-items: center; padding-left: 3px; }
        .bar { box-sizing: border-box; display: flex; flex-direction: column; align-items: center; width: 9.5px; margin-left: auto; padding-top: 2px; background: #f0f0f0; }
        .bar i { width: 8px; height: 29px; margin: 3px 0 auto; background: #cdcdcd; }
      </style>
      <div class="table">
        <div class="grid head">
          <span class="tall">${fit('Visibility', 24.5)}</span>
          <span style="grid-column: span 3">${fit('Projection/Surface', 55)}</span>
          <span style="grid-column: span 2">${fit('Cut', 10.5)}</span>
          <span class="tall">${fit('Halftone', 26)}</span>
          <span class="tall">Detail<br>Level</span>
          <span>${fit('Lines', 15)}</span><span>${fit('Patterns', 24.5)}</span><span>${fit('Transparency', 39)}</span>
          <span>${fit('Lines', 15)}</span><span>${fit('Patterns', 24.5)}</span>
        </div>
        ${rows.replace(/(Curtain Wall Mullions[\s\S]*?<span class=""><\/span><span class=""><\/span><span class=""><\/span>)<span class=""><\/span><span class=""><\/span>/, '$1<span class="shade"></span><span class="shade"></span>')}
      </div>
      <div class="bar">${icon('chevup', 7)}<i></i>${icon('chevdown', 7, '#111')}</div>
    `;
  }
}
customElements.define('category-table', CategoryTable);

class OverridesDialog extends HTMLElement {
  connectedCallback() {
    this.attachShadow({ mode: 'open' }).innerHTML = `
      <style>
        :host {
          position: absolute; left: 311px; top: 205px; box-sizing: border-box;
          display: flex; flex-direction: column; width: 436px; height: 341px;
          border: 1px solid #8d8d8d; background: #f0f0f0;
          box-shadow: 0 2px 7px rgba(0, 0, 0, 0.35);
        }
        .title { display: flex; align-items: center; justify-content: space-between; height: 16px; padding: 0 4px; background: #fff; }
        .tabs { display: flex; align-items: flex-end; height: 15px; padding-left: 4px; }
        .tabs span { box-sizing: border-box; display: flex; justify-content: center; height: 9.5px; line-height: 8.5px; border: 1px solid #dcdcdc; border-left: 0; border-bottom: 0; }
        .tabs .on { height: 11.5px; line-height: 9.5px; background: #fff; border-left: 1px solid #dcdcdc; }
        .page { display: flex; flex-direction: column; box-sizing: border-box; width: 426px; height: 287px; margin-left: 4px; padding: 4px 7px 0; border: 1px solid #dcdcdc; border-top-color: #e6e6e6; background: #fff; }
        .line { display: flex; align-items: center; height: 10px; }
        .check { box-sizing: border-box; flex: none; width: 7.5px; height: 7.5px; margin-right: 1px; margin-left: -0.5px; border: 1px solid #444; }
        .check svg { display: block; }
        .note { margin-left: auto; }
        .filter { margin-top: 3px; height: 12px; }
        .select { box-sizing: border-box; display: flex; align-items: center; justify-content: space-between; width: 59px; height: 12px; margin-left: 16.5px; padding: 0 1px 0 3px; border: 1px solid #999; }
        category-table { margin: 6px 0 5px; flex: none; }
        .lower { display: flex; justify-content: space-between; width: 411px; }
        .buttons { display: flex; gap: 4px; }
        .buttons ui-button { width: 50px; }
        .group { box-sizing: border-box; display: flex; align-items: center; justify-content: space-between; width: 216px; height: 39px; margin: 6px 0 0 1px; padding: 0 9px 3px; border: 1px solid #dedede; }
        .text { display: flex; flex-direction: column; line-height: 7.5px; padding-bottom: 5px; }
        .group ui-button { width: 61px; margin-top: -6px; }
        .host { box-sizing: border-box; display: flex; justify-content: space-between; width: 188px; height: 28px; margin-top: 1.5px; padding: 0 6px 0 5px; border: 1px solid #dedede; }
        .host > div { display: flex; flex-direction: column; }
        .legend { align-self: flex-start; height: 8px; margin: -5px 0 1px -2px; line-height: 8px; background: #fff; }
        .host ui-button { width: 61px; margin-top: 4px; }
        .foot { display: flex; justify-content: flex-end; gap: 4.5px; padding: 4px 4px 0 0; }
        .foot ui-button { width: 41px; }
        .grip { position: absolute; right: 1px; bottom: 1px; width: 5px; height: 5px; background: repeating-linear-gradient(135deg, transparent 0 1px, #c4c4c4 1px 2px); clip-path: polygon(100% 0, 100% 100%, 0 100%); }
      </style>
      <div class="title">${fit('Visibility/Graphic Overrides for Floor Plan: Level 1', 145.5)}${icon('close', 9, '#222')}</div>
      <div class="tabs">
        <span class="on" style="width:54px">${fit('Model Categories', 47)}</span>
        <span style="width:67px">${fit('Annotation Categories', 60.5)}</span>
        <span style="width:81px">${fit('Analytical Model Categories', 74.5)}</span>
        <span style="width:62px">${fit('Imported Categories', 55.5)}</span>
        <span style="width:24px">${fit('Filters', 16.5)}</span>
      </div>
      <div class="page">
        <div class="line">
          <span class="check"><svg width="6" height="6" viewBox="0 0 6 6"><path d="M.8 2.800l1.500 1.700L5.200.8" fill="none" stroke="#222"/></svg></span>
          ${fit('Show model categories in this view', 93.5)}
          <span class="note">${fit('If a category is unchecked, it will not be visible.', 127.5)}</span>
        </div>
        <div class="line filter">${fit('Filter list:', 24.5)}<span class="select">${fit('&lt;multiple&gt;', 28.5)}${icon('chevdown', 7, '#444')}</span></div>
        <category-table></category-table>
        <div class="lower">
          <div>
            <div class="buttons"><ui-button>All</ui-button><ui-button>None</ui-button><ui-button>Invert</ui-button><ui-button>Expand All</ui-button></div>
            <div class="group">
              <span class="text">${fit('Categories that are not overridden are drawn', 124)}${fit('according to Object Style settings.', 93)}</span>
              <ui-button>Object Styles...</ui-button>
            </div>
          </div>
          <div class="host">
            <div>
              <span class="legend">${fit('Override Host Layers', 57.5)}</span>
              <div class="line"><span class="check"></span>${fit('Cut Line Styles', 40)}</div>
            </div>
            <ui-button disabled>Edit...</ui-button>
          </div>
        </div>
      </div>
      <div class="foot">
        <ui-button primary>OK</ui-button><ui-button>Cancel</ui-button><ui-button disabled>Apply</ui-button><ui-button>Help</ui-button>
      </div>
      <span class="grip"></span>
    `;
  }
}
customElements.define('overrides-dialog', OverridesDialog);

class StatusBar extends HTMLElement {
  connectedCallback() {
    const dark = '#777';
    this.attachShadow({ mode: 'open' }).innerHTML = `
      <style>
        ${CELL}
        :host { box-sizing: border-box; display: flex; align-items: center; height: 13px; background: #cbc9ca; border-top: 1px solid #d9d9d9; }
        .field { box-sizing: border-box; display: flex; align-items: center; justify-content: space-between; width: 100%; height: 10px; padding: 0 1px; background: #fff; color: #888; }
      </style>
      ${row(100, [
        label(100.5, 282.5, 'Click to select, TAB for alternates, CTRL adds, SHIFT unselects.'),
        glyph(608.5, 10, 'work', '#999'),
        [617.5, 115, `<span class="field"><span></span>${icon('chevdown', 7, '#aaa')}</span>`],
        glyph(742, 9, 'brush', '#999'), label(748.5, 754.5, ':0'),
        glyph(771.5, 9, 'block', dark), glyph(786, 9, 'block2', dark),
        [795, 115, `<span class="field">${fit('Main Model', 36)}${icon('chevdown', 7, '#aaa')}</span>`],
        glyph(1042.5, 9, 'selA', dark), glyph(1057.5, 9, 'selB', dark), glyph(1071.5, 9, 'selC', dark),
        glyph(1086, 9, 'selD', dark), glyph(1100.5, 9, 'selE', dark), glyph(1115.5, 8, 'gear', '#888'),
        glyph(1129, 10, 'funnel', '#555'), label(1134, 1139.5, ':0')
      ])}
    `;
  }
}
customElements.define('status-bar', StatusBar);

class TaskBar extends HTMLElement {
  connectedCallback() {
    const app = (center, name, cls = '', size = 13) =>
      [center - 13, 26, `<span class="app ${cls}">${icon(name, size)}</span>`];
    this.attachShadow({ mode: 'open' }).innerHTML = `
      <style>
        ${CELL}
        :host { display: flex; align-items: center; height: 22px; background: #22302d; color: #fff; }
        .search { box-sizing: border-box; display: flex; align-items: center; gap: 6px; width: 100%; height: 22px; padding-left: 7px; background: #f1f1f1; color: #444; font-size: 9.3px; }
        .app { position: relative; display: flex; align-items: center; justify-content: center; width: 26px; height: 22px; }
        .run::after { content: ""; position: absolute; left: 2px; right: 2px; bottom: 0; height: 1px; background: #78b2da; }
        .front { background: #4c5855; }
        .front::after { left: 0; right: 0; }
        .clock { display: flex; flex-direction: column; align-items: center; line-height: 10px; }
        .alert { position: relative; display: block; }
        .count { position: absolute; left: 4px; top: 4px; width: 7px; height: 7px; border: 1px solid #8d9694; border-radius: 50%; background: #22302d; font-size: 6px; line-height: 7px; text-align: center; }
        .edge { width: 1px; height: 22px; background: #65706d; }
      </style>
      ${row(100, [
        glyph(113.5, 10, 'start'),
        [127, 194, `<span class="search">${icon('search', 10, '#333')}${fit('Type here to search', 72)}</span>`],
        app(334, 'cortana', '', 11), app(361, 'taskview', '', 10), app(389.5, 'pc'),
        app(417.5, 'folder', 'run'), app(445, 'word'), app(472.5, 'excel'), app(500.5, 'chrome', 'run', 14),
        app(527.5, 'outlook'), app(555, 'teams'), app(582.5, 'edge', 'run', 12), app(610, 'revitapp', 'run front', 14),
        glyph(1080, 8, 'chevup'), glyph(1094, 10, 'monitor'), glyph(1107, 10, 'speaker'),
        [1117, 30, `<span class="clock">${fit('11:14 PM', 26.5)}${fit('8/29/2021', 29)}</span>`],
        [1157, 10, `<span class="alert">${icon('notif', 9)}<span class="count">6</span></span>`],
        [1176.5, 1, '<span class="edge"></span>']
      ])}
    `;
  }
}
customElements.define('task-bar', TaskBar);

class RevitApp extends HTMLElement {
  connectedCallback() {
    this.attachShadow({ mode: 'open' }).innerHTML = `
      <style>
        :host { position: relative; display: flex; flex-direction: column; width: 1080px; height: 720px; margin-left: 100px; }
        .top { display: flex; flex: none; height: 23px; }
        .peek { box-sizing: border-box; width: 42px; height: 10px; margin-left: 519px; border: 1px solid #587082; border-top: 0; background: #1b344b; }
        .app { display: flex; flex-direction: column; width: 1080px; overflow: hidden; }
        .main { display: flex; height: 543px; }
        .pointer { position: absolute; left: 387px; top: 358.5px; }
      </style>
      <div class="top"><span class="peek"></span></div>
      <div class="app">
        <title-bar></title-bar>
        <ribbon-tabs></ribbon-tabs>
        <ribbon-bar></ribbon-bar>
        <div class="main">
          <project-browser></project-browser>
          <drawing-view></drawing-view>
          <properties-panel></properties-panel>
        </div>
        <status-bar></status-bar>
        <task-bar></task-bar>
      </div>
      <overrides-dialog></overrides-dialog>
      <svg class="pointer" width="20" height="31" viewBox="0 0 20 31"><path d="M1.500 1v25.500l5.500-5 3.800 8.500 4-2-4-8h7.400z" fill="#fff" stroke="#222" stroke-width="1.400"/></svg>
    `;
  }
}
customElements.define('revit-app', RevitApp);
</script>
</body>
</html>
